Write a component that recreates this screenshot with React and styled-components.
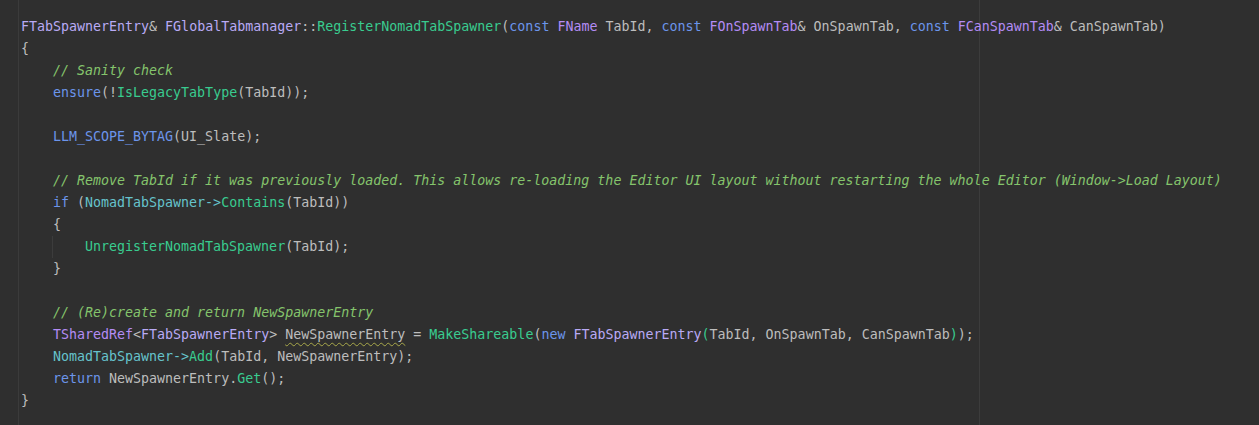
import React from 'react'
import styled, { createGlobalStyle, css } from 'styled-components'

const GlobalStyle = createGlobalStyle`
    html, body {
        margin: 0;
        padding: 0;
        background: #2f2f2f;
    }
`

const colors = {
    tx: '#bdbdbd',
    kw: '#6c95eb',
    macro: '#6c95eb',
    type: '#b48cf5',
    struct: '#b9aaf5',
    fn: '#39cc8f',
    field: '#66c3cc',
    cm: '#85c46c',
}

const Editor = styled.div`
    display: flex;
    min-height: 100vh;
    background: #2f2f2f;
    font-family: "DejaVu Sans Mono", "Liberation Mono", monospace;
    font-size: 13.3px;
`

const Gutter = styled.div`
    width: 18px;
    flex: none;
    border-right: 1px solid #3b3b3b;
`

const CodeArea = styled.div`
    flex: 1;
    padding: 16px 0 0 2px;
    background-image: linear-gradient(to right,
        transparent 960px, #3c3c3c 960px, #3c3c3c 961px, transparent 961px);
`

const Line = styled.div`
    display: flex;
    height: 22px;
    line-height: 22px;
    white-space: pre;
    color: ${colors.tx};
`

const Indent = styled.span`
    display: inline-block;
    width: 32px;
    height: 22px;
    flex: none;
    ${props => props.guide && css`
        box-shadow: inset -1px 0 0 #3c3c3c;
    `}
`

const Token = styled.span`
    color: ${props => colors[props.kind] || colors.tx};
    font-style: ${props => props.kind === 'cm' ? 'italic' : 'normal'};
    ${props => props.wavy && css`
        text-decoration: underline wavy #a8a84a;
        text-decoration-thickness: 1px;
        text-underline-offset: 3px;
    `}
`

const code = [
    { indent: 0, tokens: [['struct', 'FTabSpawnerEntry'], ['tx', '& '], ['struct', 'FGlobalTabmanager'], ['tx', '::'], ['fn', 'RegisterNomadTabSpawner'], ['tx', '('], ['kw', 'const'], ['tx', ' '], ['type', 'FName'], ['tx', ' TabId, '], ['kw', 'const'], ['tx', ' '], ['type', 'FOnSpawnTab'], ['tx', '& OnSpawnTab, '], ['kw', 'const'], ['tx', ' '], ['type', 'FCanSpawnTab'], ['tx', '& CanSpawnTab)']] },
    { indent: 0, tokens: [['tx', '{']] },
    { indent: 1, tokens: [['cm', '// Sanity check']] },
    { indent: 1, tokens: [['macro', 'ensure'], ['tx', '(!'], ['fn', 'IsLegacyTabType'], ['tx', '(TabId));']] },
    { indent: 0, tokens: [] },
    { indent: 1, tokens: [['macro', 'LLM_SCOPE_BYTAG'], ['tx', '(UI_Slate);']] },
    { indent: 0, tokens: [] },
    { indent: 1, tokens: [['cm', '// Remove TabId if it was previously loaded. This allows re-loading the Editor UI layout without restarting the whole Editor (Window->Load Layout)']] },
    { indent: 1, tokens: [['kw', 'if'], ['tx', ' ('], ['field', 'NomadTabSpawner->'], ['fn', 'Contains'], ['tx', '(TabId))']] },
    { indent: 1, tokens: [['tx', '{']] },
    { indent: 2, guide: true, tokens: [['fn', 'UnregisterNomadTabSpawner'], ['tx', '(TabId);']] },
    { indent: 1, tokens: [['tx', '}']] },
    { indent: 0, tokens: [] },
    { indent: 1, tokens: [['cm', '// (Re)create and return NewSpawnerEntry']] },
    { indent: 1, tokens: [['type', 'TSharedRef'], ['tx', '<'], ['struct', 'FTabSpawnerEntry'], ['tx', '> '], ['wavy', 'NewSpawnerEntry'], ['tx', ' = '], ['fn', 'MakeShareable'], ['tx', '('], ['kw', 'new'], ['tx', ' '], ['struct', 'FTabSpawnerEntry'], ['fn', '('], ['tx', 'TabId, OnSpawnTab, CanSpawnTab'], ['fn', ')'], ['tx', ');']] },
    { indent: 1, tokens: [['field', 'NomadTabSpawner->'], ['fn', 'Add'], ['tx', '(TabId, NewSpawnerEntry);']] },
    { indent: 1, tokens: [['kw', 'return'], ['tx', ' NewSpawnerEntry.'], ['fn', 'Get'], ['tx', '();']] },
    { indent: 0, tokens: [['tx', '}']] },
]

const CodeLine = ({ indent, guide, tokens }) => (
    <Line>
        {Array.from({ length: indent }).map((_, i) => (
            <Indent key={i} guide={guide && i === 0 ? 1 : 0} />
        ))}
        {tokens.map(([kind, text], i) => (
            <Token key={i} kind={kind === 'wavy' ? 'tx' : kind} wavy={kind === 'wavy' ? 1 : 0}>
                {text}
            </Token>
        ))}
    </Line>
)

export default function App() {
    return (
        <>
            <GlobalStyle />
            <Editor>
                <Gutter />
                <CodeArea>
                    {code.map((line, i) => (
                        <CodeLine key={i} {...line} />
                    ))}
                </CodeArea>
            </Editor>
        </>
    )
}
